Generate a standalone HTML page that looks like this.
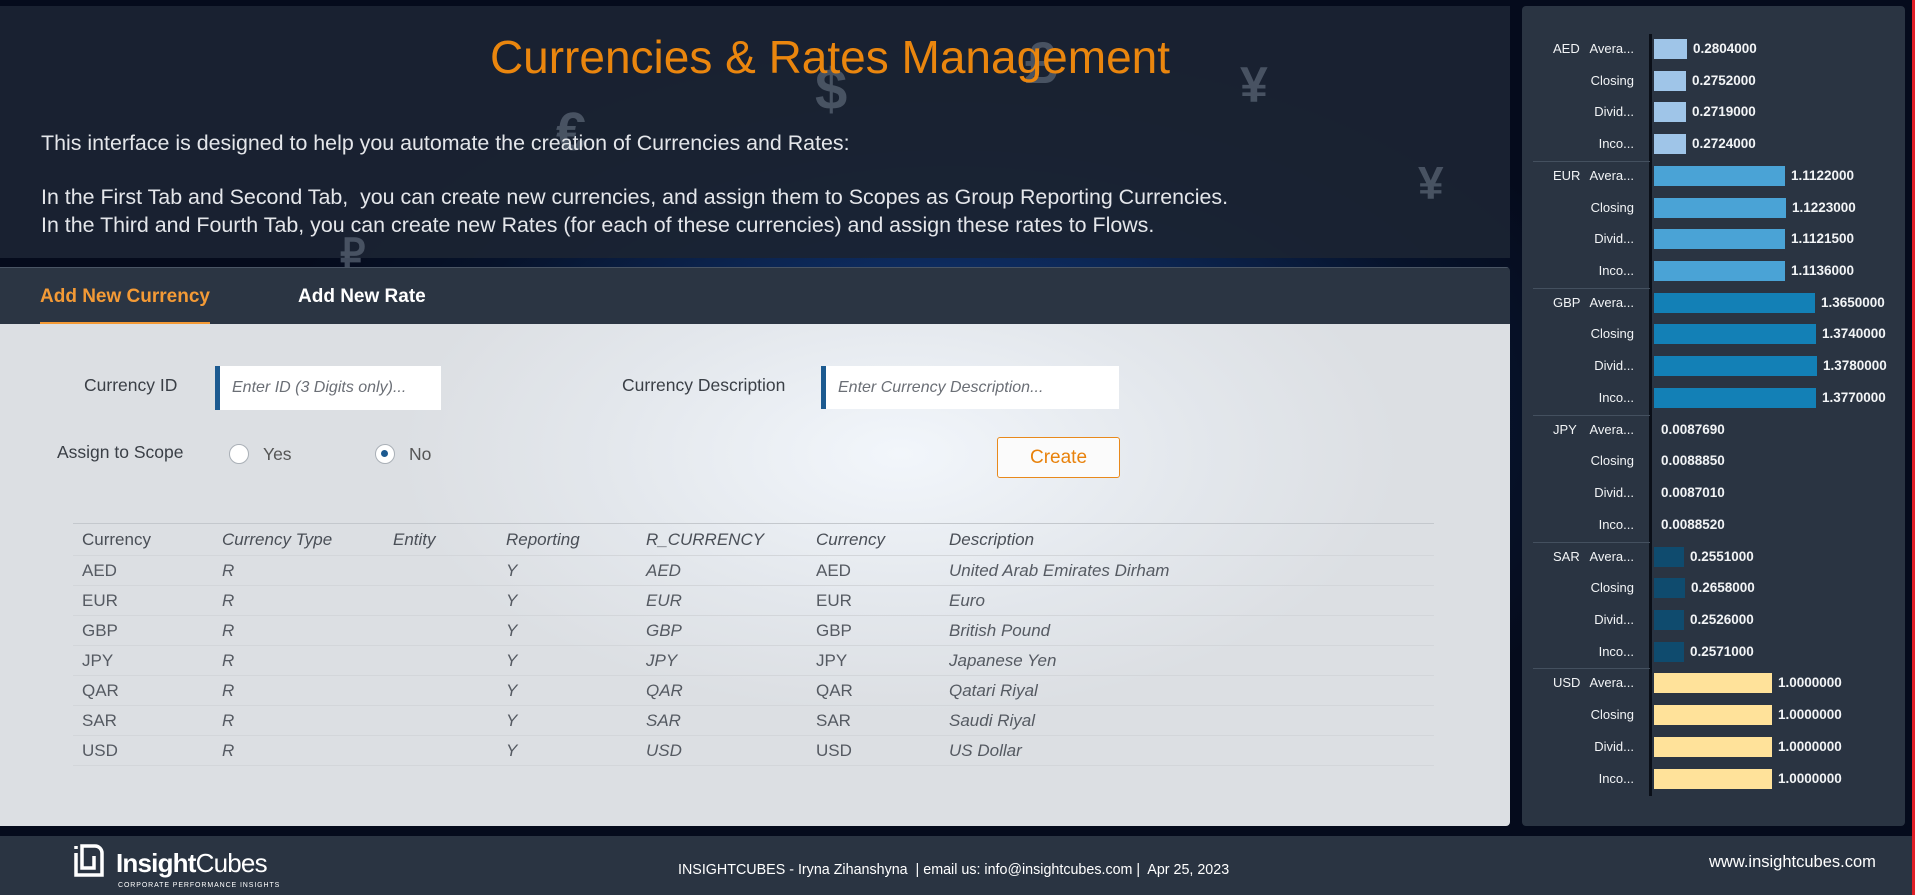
<!DOCTYPE html>
<html><head><meta charset="utf-8"><style>
*{margin:0;padding:0;box-sizing:border-box}
body{width:1915px;height:895px;overflow:hidden;position:relative;font-family:"Liberation Sans",sans-serif;
background:radial-gradient(ellipse 700px 400px at 950px 420px,#1b4f9a 0%,#0d2a5c 40%,#07132b 75%,#050b1c 100%);}
.abs{position:absolute}
#hdr{left:0;top:6px;width:1510px;height:252px;background:rgba(27,35,51,0.93)}
#hdr h1{position:absolute;left:0;width:1660px;text-align:center;top:24px;font-weight:normal;font-size:46px;color:#ea860e}
#hdr p{position:absolute;left:41px;font-size:21.4px;color:#e4e6ea}
.sym{position:absolute;color:#5d6878;font-weight:bold;opacity:.7}
#tabs{left:0;top:267px;width:1510px;height:559px;border-radius:0 4px 4px 0;overflow:hidden}
#tabbar{position:absolute;left:0;top:0;width:100%;height:57px;background:#2b3543;border-top:1px solid #4a5564}
.tab{position:absolute;top:18px;font-size:19px;font-weight:bold}
#content{position:absolute;left:0;top:57px;width:100%;height:502px;
background:radial-gradient(ellipse 500px 260px at 900px 130px,#f2f6fb 0%,#e3e7ec 60%,#dcdfe3 100%)}
.lbl{position:absolute;font-size:17.5px;color:#3a3f46}
.inp{position:absolute;background:#fff;border-left:5px solid #1c5a90;font-style:italic;color:#6b6f76;font-size:16px;padding:13px 0 0 12px}
.radio{position:absolute;width:20px;height:20px;border-radius:50%;border:1.5px solid #aab0b7;background:#fff}
table{position:absolute;left:73px;top:199px;width:1361px;border-collapse:collapse;border-top:1px solid #c4c8cd;font-size:17px;color:#555a62}
td,th{height:30px;text-align:left;font-weight:normal;padding-left:9px;border-bottom:1px solid #d3d6da}
th{height:32px;color:#4a4f57}
.i{font-style:italic}
#rp{left:1522px;top:6px;width:383px;height:820px;background:#2a3442;border-radius:4px}
#red{left:1912px;top:0;width:3px;height:895px;background:#e01e26}
.cc,.fl,.vl{position:absolute;font-size:13px;color:#f2f4f6;line-height:16px}
.fl{width:100px;text-align:right;left:1534px}
.cc{left:1553px}
.vl{font-weight:bold;font-size:13.5px}
.bar{position:absolute;left:1654px;height:20px}
.sep{position:absolute;left:1533px;width:117px;height:1px;background:#44505f}
#foot{left:0;top:836px;width:1912px;height:59px;background:#2a3442}
</style></head><body>
<div class="abs" id="hdr">
<span class="sym" style="left:815px;top:50px;font-size:58px">$</span>
<span class="sym" style="left:1025px;top:24px;font-size:58px">£</span>
<span class="sym" style="left:1240px;top:50px;font-size:50px">¥</span>
<span class="sym" style="left:556px;top:95px;font-size:54px">€</span>
<span class="sym" style="left:1418px;top:150px;font-size:46px">¥</span>
<span class="sym" style="left:340px;top:225px;font-size:40px">₽</span>
<h1>Currencies &amp; Rates Management</h1>
<p style="top:125px">This interface is designed to help you automate the creation of Currencies and Rates:</p>
<p style="top:179px">In the First Tab and Second Tab,&nbsp; you can create new currencies, and assign them to Scopes as Group Reporting Currencies.</p>
<p style="top:207px">In the Third and Fourth Tab, you can create new Rates (for each of these currencies) and assign these rates to Flows.</p>
</div>
<div class="abs" id="tabs">
<div id="tabbar">
<span class="tab" style="left:40px;color:#f39a36">Add New Currency</span>
<span class="tab" style="left:298px;color:#fff">Add New Rate</span>
<div class="abs" style="left:40px;top:54px;width:170px;height:3px;background:#f39a36"></div>
</div>
<div id="content">
<span class="lbl" style="left:84px;top:51px">Currency ID</span>
<div class="inp" style="left:215px;top:42px;width:226px;height:44px">Enter ID (3 Digits only)...</div>
<span class="lbl" style="left:622px;top:51px">Currency Description</span>
<div class="inp" style="left:821px;top:42px;width:298px;height:43px">Enter Currency Description...</div>
<span class="lbl" style="left:57px;top:118px">Assign to Scope</span>
<div class="radio" style="left:229px;top:120px"></div><span class="lbl" style="left:263px;top:120px;color:#555">Yes</span>
<div class="radio" style="left:375px;top:120px"><div style="position:absolute;left:5px;top:5px;width:7px;height:7px;border-radius:50%;background:#1c5a90"></div></div><span class="lbl" style="left:409px;top:120px;color:#555">No</span>
<div class="abs" style="left:997px;top:113px;width:123px;height:41px;background:#fbfbfb;border:1.5px solid #e8891c;border-radius:3px;color:#e8820c;font-size:19px;text-align:center;line-height:40px">Create</div>
<table>
<tr><th>Currency</th><th class="i">Currency Type</th><th class="i">Entity</th><th class="i">Reporting</th><th class="i">R_CURRENCY</th><th class="i">Currency</th><th class="i">Description</th></tr>
<tr><td style="width:140px">AED</td><td class="i" style="width:171px">R</td><td style="width:113px"></td><td class="i" style="width:140px">Y</td><td class="i" style="width:170px">AED</td><td style="width:133px">AED</td><td class="i">United Arab Emirates Dirham</td></tr>
<tr><td>EUR</td><td class="i">R</td><td></td><td class="i">Y</td><td class="i">EUR</td><td>EUR</td><td class="i">Euro</td></tr>
<tr><td>GBP</td><td class="i">R</td><td></td><td class="i">Y</td><td class="i">GBP</td><td>GBP</td><td class="i">British Pound</td></tr>
<tr><td>JPY</td><td class="i">R</td><td></td><td class="i">Y</td><td class="i">JPY</td><td>JPY</td><td class="i">Japanese Yen</td></tr>
<tr><td>QAR</td><td class="i">R</td><td></td><td class="i">Y</td><td class="i">QAR</td><td>QAR</td><td class="i">Qatari Riyal</td></tr>
<tr><td>SAR</td><td class="i">R</td><td></td><td class="i">Y</td><td class="i">SAR</td><td>SAR</td><td class="i">Saudi Riyal</td></tr>
<tr><td>USD</td><td class="i">R</td><td></td><td class="i">Y</td><td class="i">USD</td><td>USD</td><td class="i">US Dollar</td></tr>
</table>
</div>
</div>
<div class="abs" id="rp"></div>
<div class="abs" style="left:1649px;top:34px;width:3px;height:762px;background:#0a0f18"></div>
<div id="chart"></div>
<div class="abs" id="foot">
<svg class="abs" style="left:73px;top:8px" width="32" height="34" viewBox="0 0 32 34"><path d="M3 2v3M3 9v22h26V9a7 7 0 0 0-7-7H9v22h12V12" fill="none" stroke="#fff" stroke-width="3.5"/></svg>
<span class="abs" style="left:116px;top:12px;font-size:26px;color:#fff;letter-spacing:-0.8px"><b>Insight</b>Cubes</span>
<span class="abs" style="left:118px;top:46px;font-size:7px;color:#fff;letter-spacing:0.9px">CORPORATE PERFORMANCE INSIGHTS</span>
<span class="abs" style="left:678px;top:26px;font-size:14.3px;color:#fff">INSIGHTCUBES - Iryna Zihanshyna&nbsp; | email us: info@insightcubes.com |&nbsp; Apr 25, 2023</span>
<span class="abs" style="left:1709px;top:17px;font-size:16.5px;color:#fff">www.insightcubes.com</span>
</div>
<div class="abs" id="red"></div>
<script>
var g=[["AED","#9fc5e8",[0.2804,0.2752,0.2719,0.2724]],["EUR","#4aa3d6",[1.1122,1.1223,1.11215,1.1136]],["GBP","#1380b6",[1.365,1.374,1.378,1.377]],["JPY","#1380b6",[0.008769,0.008885,0.008701,0.008852]],["SAR","#0f4b6e",[0.2551,0.2658,0.2526,0.2571]],["USD","#ffe29a",[1,1,1,1]]];
var f=["Avera...","Closing","Divid...","Inco..."],h="";
g.forEach(function(c,gi){c[2].forEach(function(v,j){var i=gi*4+j,y=49+i*31.72,w=Math.round(v*118);
if(j==0){h+='<div class="cc" style="top:'+(y-8)+'px">'+c[0]+'</div>';if(gi>0)h+='<div class="sep" style="top:'+(y-15)+'px"></div>';}
h+='<div class="fl" style="top:'+(y-8)+'px">'+f[j]+'</div>';
if(w>1)h+='<div class="bar" style="top:'+(y-10)+'px;width:'+w+'px;background:'+c[1]+'"></div>';
h+='<div class="vl" style="left:'+(1654+Math.max(w,0)+6)+'px;top:'+(y-8)+'px">'+v.toFixed(7)+'</div>';});});
document.getElementById("chart").innerHTML=h;
</script>
</body></html>
